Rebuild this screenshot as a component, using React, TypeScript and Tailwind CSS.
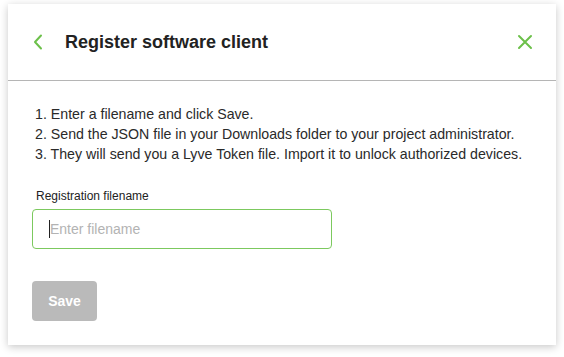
import React from "react";

export default function App() {
  return (
    <div className="w-[564px] h-[357px] bg-white pt-[4px] pl-[8px]" style={{ fontFamily: '"Liberation Sans", Arial, sans-serif' }}>
      <div className="w-[548px] h-[341px] bg-white shadow-[0_2px_8px_rgba(0,0,0,0.22)] flex flex-col">
        <div className="h-[77px] flex items-center pl-[25px] pr-[23px] border-b border-[#b5b5b5] shrink-0">
          <svg width="10" height="16" viewBox="0 0 10 16" className="mr-[22px]">
            <path d="M8 1.5 L2 8 L8 14.5" fill="none" stroke="#6cc04a" strokeWidth="2" strokeLinecap="round" strokeLinejoin="round" />
          </svg>
          <div className="text-[18px] font-bold text-[#222] flex-1">Register software client</div>
          <svg width="16" height="16" viewBox="0 0 16 16">
            <path d="M2 2 L14 14 M14 2 L2 14" fill="none" stroke="#6cc04a" strokeWidth="2" strokeLinecap="round" />
          </svg>
        </div>
        <div className="pl-[27px] pt-[23px] text-[14.2px] leading-[20px] text-[#2a2a2a]">
          <div>1. Enter a filename and click Save.</div>
          <div>2. Send the JSON file in your Downloads folder to your project administrator.</div>
          <div>3. They will send you a Lyve Token file. Import it to unlock authorized devices.</div>
        </div>
        <div className="pl-[24px] pt-[24px]">
          <div className="text-[12px] leading-[16px] text-[#222] pl-[4px]">Registration filename</div>
          <div className="mt-[5px] w-[300px] h-[40px] border border-[#7cc95e] rounded-[4px] flex items-center pl-[16px]">
            <span className="w-px h-[18px] bg-[#222]"></span>
            <span className="text-[14px] text-[#b3b3b3]">Enter filename</span>
          </div>
          <div className="mt-[32px] w-[65px] h-[40px] rounded-[4px] bg-[#bababa] flex items-center justify-center text-white font-bold text-[14px]">Save</div>
        </div>
      </div>
    </div>
  );
}
